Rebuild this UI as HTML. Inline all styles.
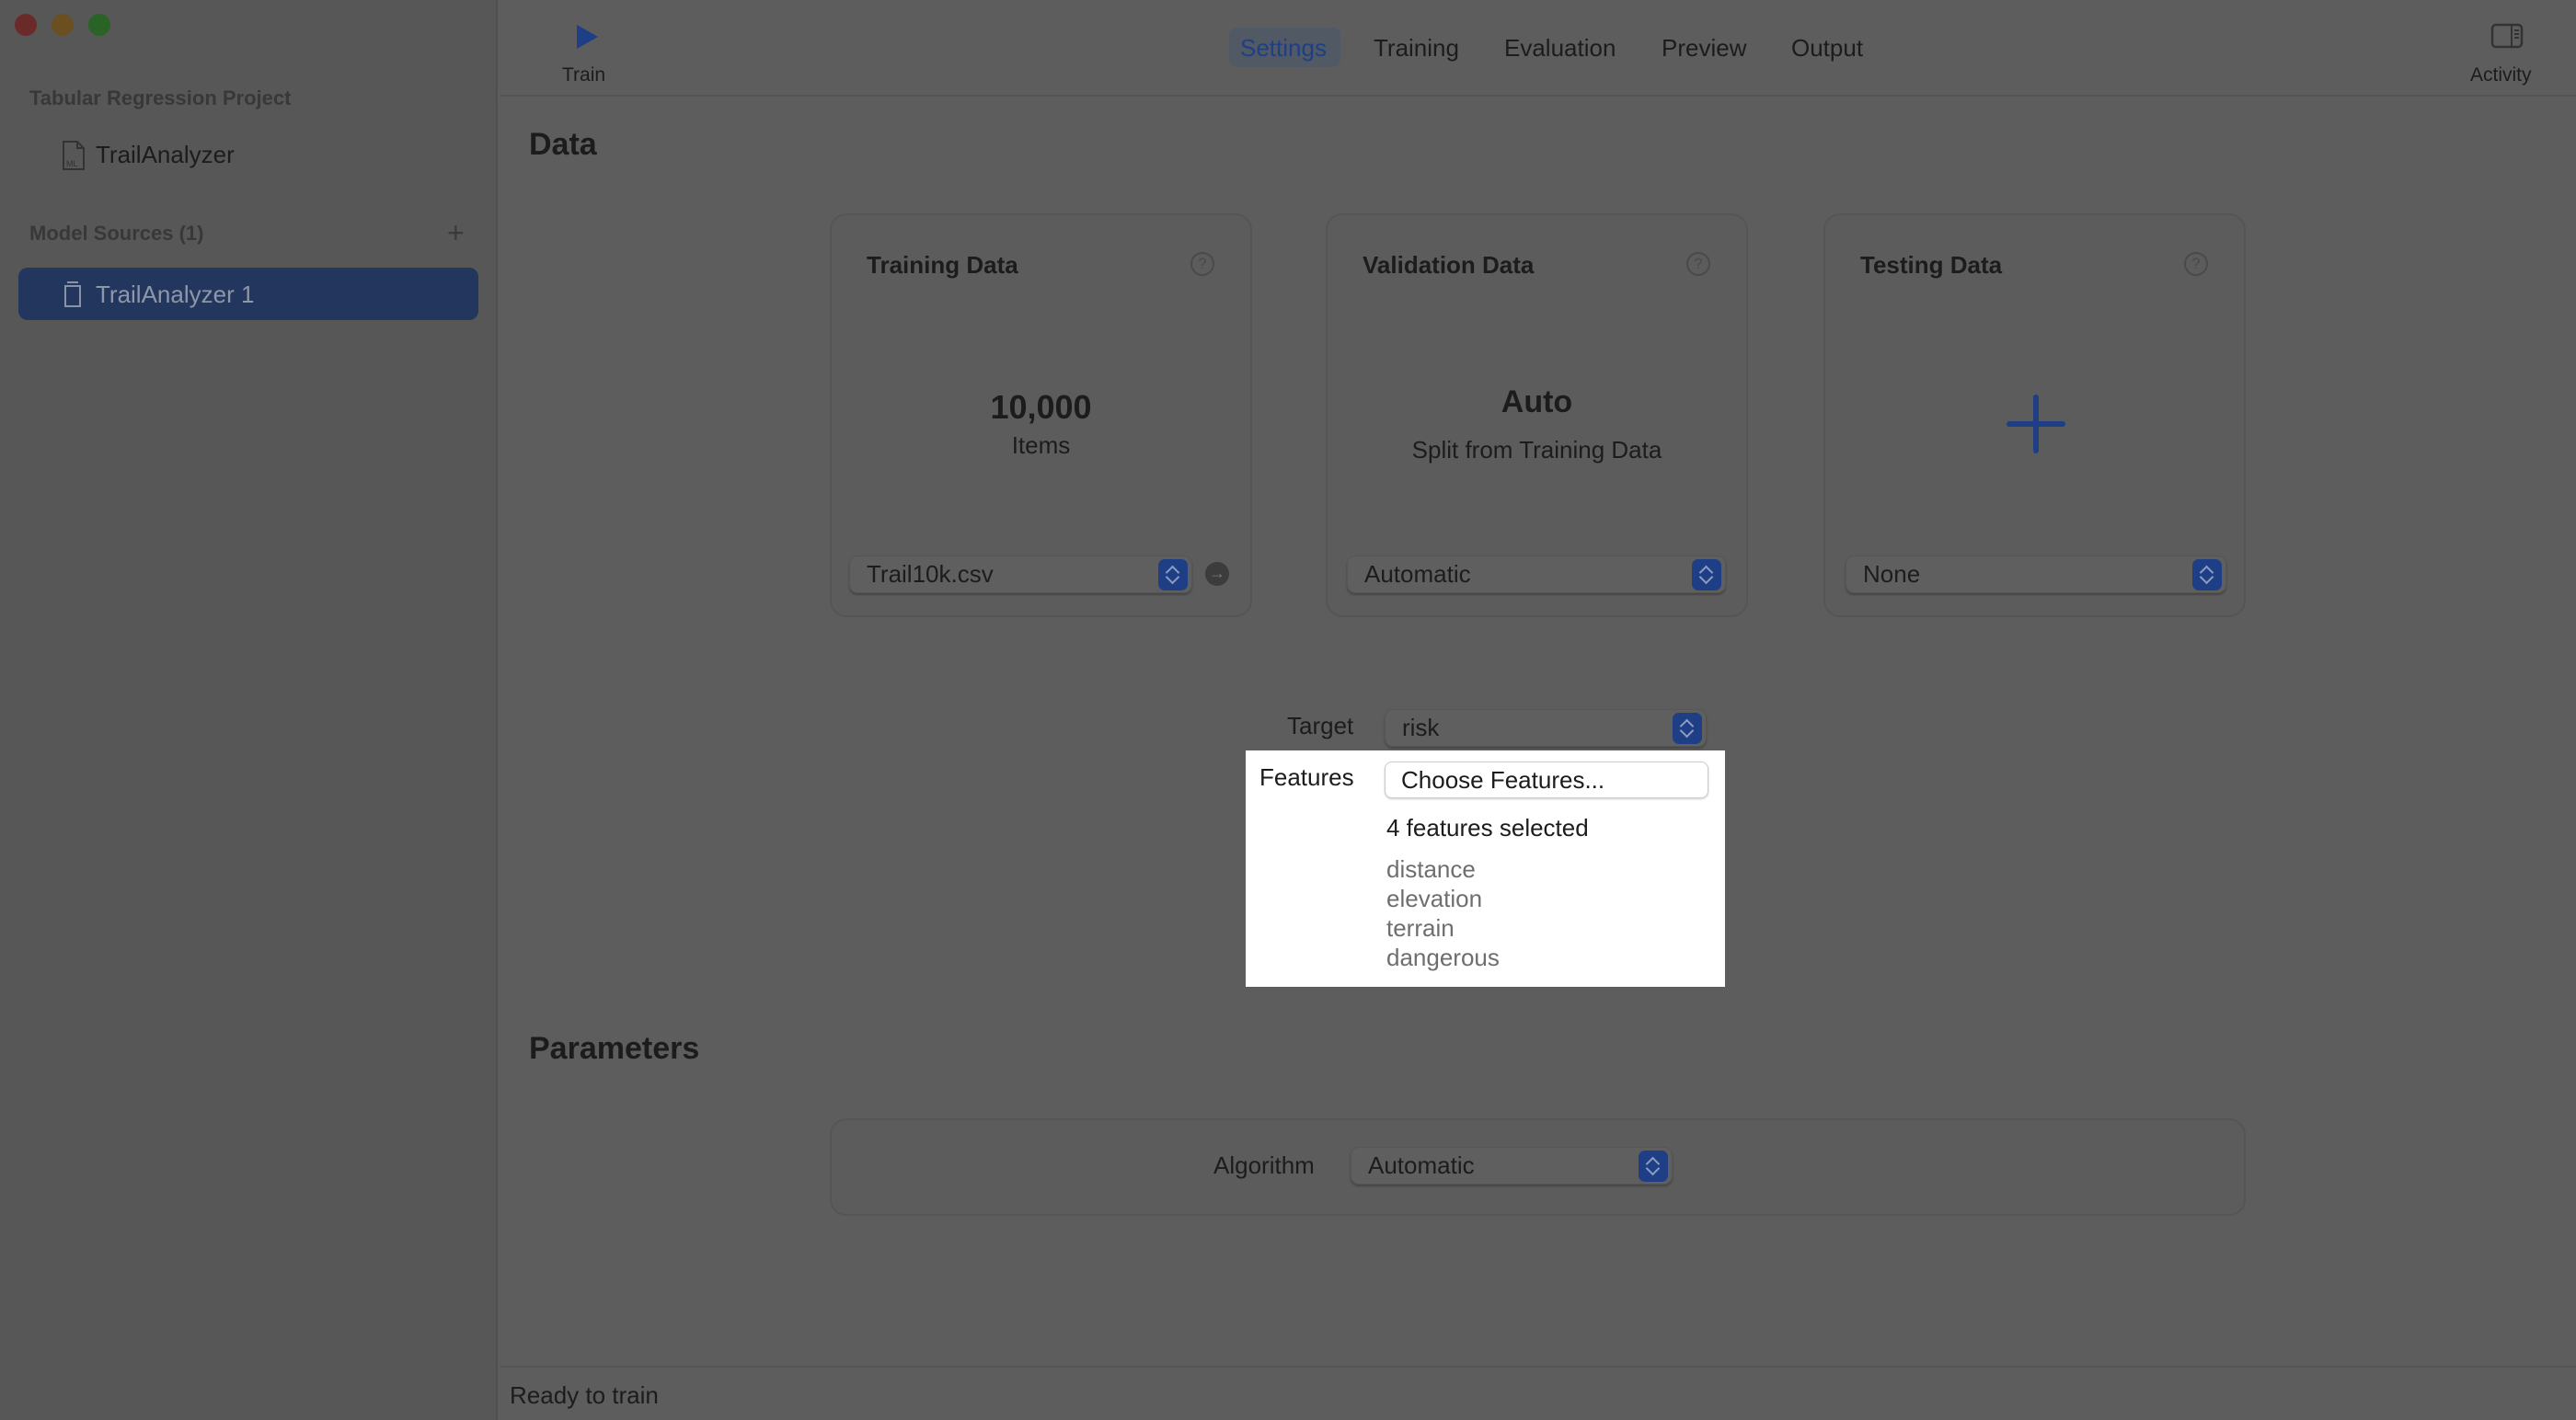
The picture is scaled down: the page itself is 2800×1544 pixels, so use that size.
<!DOCTYPE html>
<html><head><meta charset="utf-8"><style>
*{margin:0;padding:0;box-sizing:border-box}
body{width:2800px;height:1544px;background:#5d5d5d;font-family:"Liberation Sans",sans-serif;color:#1c1c1c;position:relative;overflow:hidden}
.a{position:absolute;white-space:nowrap}
#side{left:0;top:0;width:541px;height:1544px;background:#575757;border-right:2px solid #505050}
.dot{position:absolute;width:24px;height:24px;border-radius:50%;top:15px}
.tab{position:absolute;top:37px;font-size:26px;color:#1c1c1c}
.card{position:absolute;border:2px solid #555;border-radius:18px;background:#5c5c5c}
.ct{position:absolute;left:38px;top:39px;font-size:26px;font-weight:bold}
.q{position:absolute;top:40px;width:26px;height:26px;border:2px solid #4a4a4a;border-radius:50%;color:#4a4a4a;font-size:17px;text-align:center;line-height:22px}
.dd{position:absolute;height:41px;border-radius:9px;background:#5f5f5f;border:1px solid #565656;box-shadow:0 2px 2px rgba(0,0,0,.25);font-size:26px;line-height:39px;padding-left:18px}
.st{position:absolute;right:4px;top:3px;width:32px;height:34px;border-radius:7px;background:#1e3f85}
.st:before,.st:after{content:"";position:absolute;left:10px;width:9px;height:9px;border:solid #8d9cc0;border-width:2px 0 0 2px}
.st:before{top:9px;transform:rotate(45deg)}
.st:after{top:14px;transform:rotate(225deg)}
.lbl{font-size:26px}
</style></head><body>
<div class="a" id="side"></div>
<div class="dot" style="left:16px;background:#6b2a2a"></div>
<div class="dot" style="left:56px;background:#6a5020"></div>
<div class="dot" style="left:96px;background:#2a6326"></div>
<div class="a" style="left:32px;top:94px;font-size:22px;color:#333;font-weight:bold;opacity:.85">Tabular Regression Project</div>
<svg class="a" style="left:67px;top:152px" width="26" height="34" viewBox="0 0 26 34"><path d="M2 2h15l7 7v23H2z M17 2v7h7" fill="none" stroke="#333" stroke-width="2"/><text x="5" y="29" font-size="9" font-family="Liberation Sans" fill="#333">ML</text></svg>
<div class="a" style="left:104px;top:153px;font-size:26px">TrailAnalyzer</div>
<div class="a" style="left:32px;top:241px;font-size:22px;color:#333;font-weight:bold;opacity:.85">Model Sources (1)</div>
<div class="a" style="left:486px;top:235px;font-size:32px;color:#3a3a3a">+</div>
<div class="a" style="left:20px;top:291px;width:500px;height:57px;border-radius:10px;background:#22365e"></div>
<svg class="a" style="left:68px;top:305px" width="22" height="30" viewBox="0 0 22 30"><path d="M5 2h12M3 6h16v22H3z" fill="none" stroke="#8a93a6" stroke-width="2"/></svg>
<div class="a" style="left:104px;top:305px;font-size:26px;color:#8e97a8">TrailAnalyzer 1</div>

<div class="a" style="left:543px;top:103px;width:2257px;height:2px;background:#555"></div>
<svg class="a" style="left:624px;top:25px" width="28" height="30" viewBox="0 0 28 30"><path d="M3 2L26 15L3 28z" fill="#1e3f85"/></svg>
<div class="a" style="left:611px;top:70px;font-size:21px">Train</div>
<div class="a" style="left:1336px;top:30px;width:121px;height:43px;border-radius:9px;background:#515964"></div>
<div class="tab" style="left:1348px;color:#1e3f85">Settings</div>
<div class="tab" style="left:1493px">Training</div>
<div class="tab" style="left:1635px">Evaluation</div>
<div class="tab" style="left:1806px">Preview</div>
<div class="tab" style="left:1947px">Output</div>
<svg class="a" style="left:2707px;top:25px" width="36" height="28" viewBox="0 0 36 28"><rect x="2" y="2" width="32" height="24" rx="4" fill="none" stroke="#333" stroke-width="2.5"/><path d="M23 2v24M26 8h5M26 12h5M26 16h5" stroke="#333" stroke-width="2"/></svg>
<div class="a" style="left:2685px;top:70px;font-size:21px">Activity</div>

<div class="a" style="left:575px;top:138px;font-size:34px;font-weight:bold">Data</div>

<div class="card" style="left:902px;top:232px;width:459px;height:439px">
<div class="ct">Training Data</div><div class="q" style="left:390px">?</div>
<div class="a" style="left:0;width:455px;text-align:center;top:188px;font-size:36px;font-weight:bold">10,000</div>
<div class="a" style="left:0;width:455px;text-align:center;top:235px;font-size:26px">Items</div>
<div class="dd" style="left:19px;top:370px;width:373px">Trail10k.csv<div class="st"></div></div>
<div class="a" style="left:406px;top:377px;width:26px;height:26px;border-radius:50%;background:#3c3c3c;color:#777;font-size:18px;text-align:center;line-height:25px">→</div>
</div>
<div class="card" style="left:1441px;top:232px;width:459px;height:439px">
<div class="ct">Validation Data</div><div class="q" style="left:390px">?</div>
<div class="a" style="left:0;width:455px;text-align:center;top:184px;font-size:34px;font-weight:bold">Auto</div>
<div class="a" style="left:0;width:455px;text-align:center;top:240px;font-size:26px">Split from Training Data</div>
<div class="dd" style="left:21px;top:370px;width:412px">Automatic<div class="st"></div></div>
</div>
<div class="card" style="left:1982px;top:232px;width:459px;height:439px">
<div class="ct">Testing Data</div><div class="q" style="left:390px">?</div>
<svg class="a" style="left:197px;top:195px" width="64" height="64" viewBox="0 0 64 64"><path d="M32 3v58M3 32h58" stroke="#1e3f85" stroke-width="6" stroke-linecap="round"/></svg>
<div class="dd" style="left:22px;top:370px;width:414px">None<div class="st"></div></div>
</div>

<div class="a lbl" style="left:1399px;top:774px">Target</div>
<div class="dd" style="left:1505px;top:771px;width:350px">risk<div class="st"></div></div>
<div class="a" style="left:1354px;top:816px;width:521px;height:257px;background:#fff"></div>
<div class="a lbl" style="left:1369px;top:830px">Features</div>
<div class="a" style="left:1505px;top:828px;width:352px;height:40px;border-radius:8px;border:1px solid #ccc;box-shadow:0 1px 2px rgba(0,0,0,.2);background:#fff;font-size:26px;line-height:38px;padding-left:17px">Choose Features...</div>
<div class="a lbl" style="left:1507px;top:885px">4 features selected</div>
<div class="a" style="left:1507px;top:929px;font-size:26px;line-height:32px;color:#6e6e6e">distance<br>elevation<br>terrain<br>dangerous</div>

<div class="a" style="left:575px;top:1121px;font-size:34px;font-weight:bold">Parameters</div>
<div class="card" style="left:902px;top:1216px;width:1539px;height:106px"></div>
<div class="a lbl" style="left:1319px;top:1252px">Algorithm</div>
<div class="dd" style="left:1468px;top:1247px;width:350px">Automatic<div class="st"></div></div>

<div class="a" style="left:543px;top:1485px;width:2257px;height:2px;background:#555"></div>
<div class="a" style="left:554px;top:1502px;font-size:26px">Ready to train</div>
</body></html>
